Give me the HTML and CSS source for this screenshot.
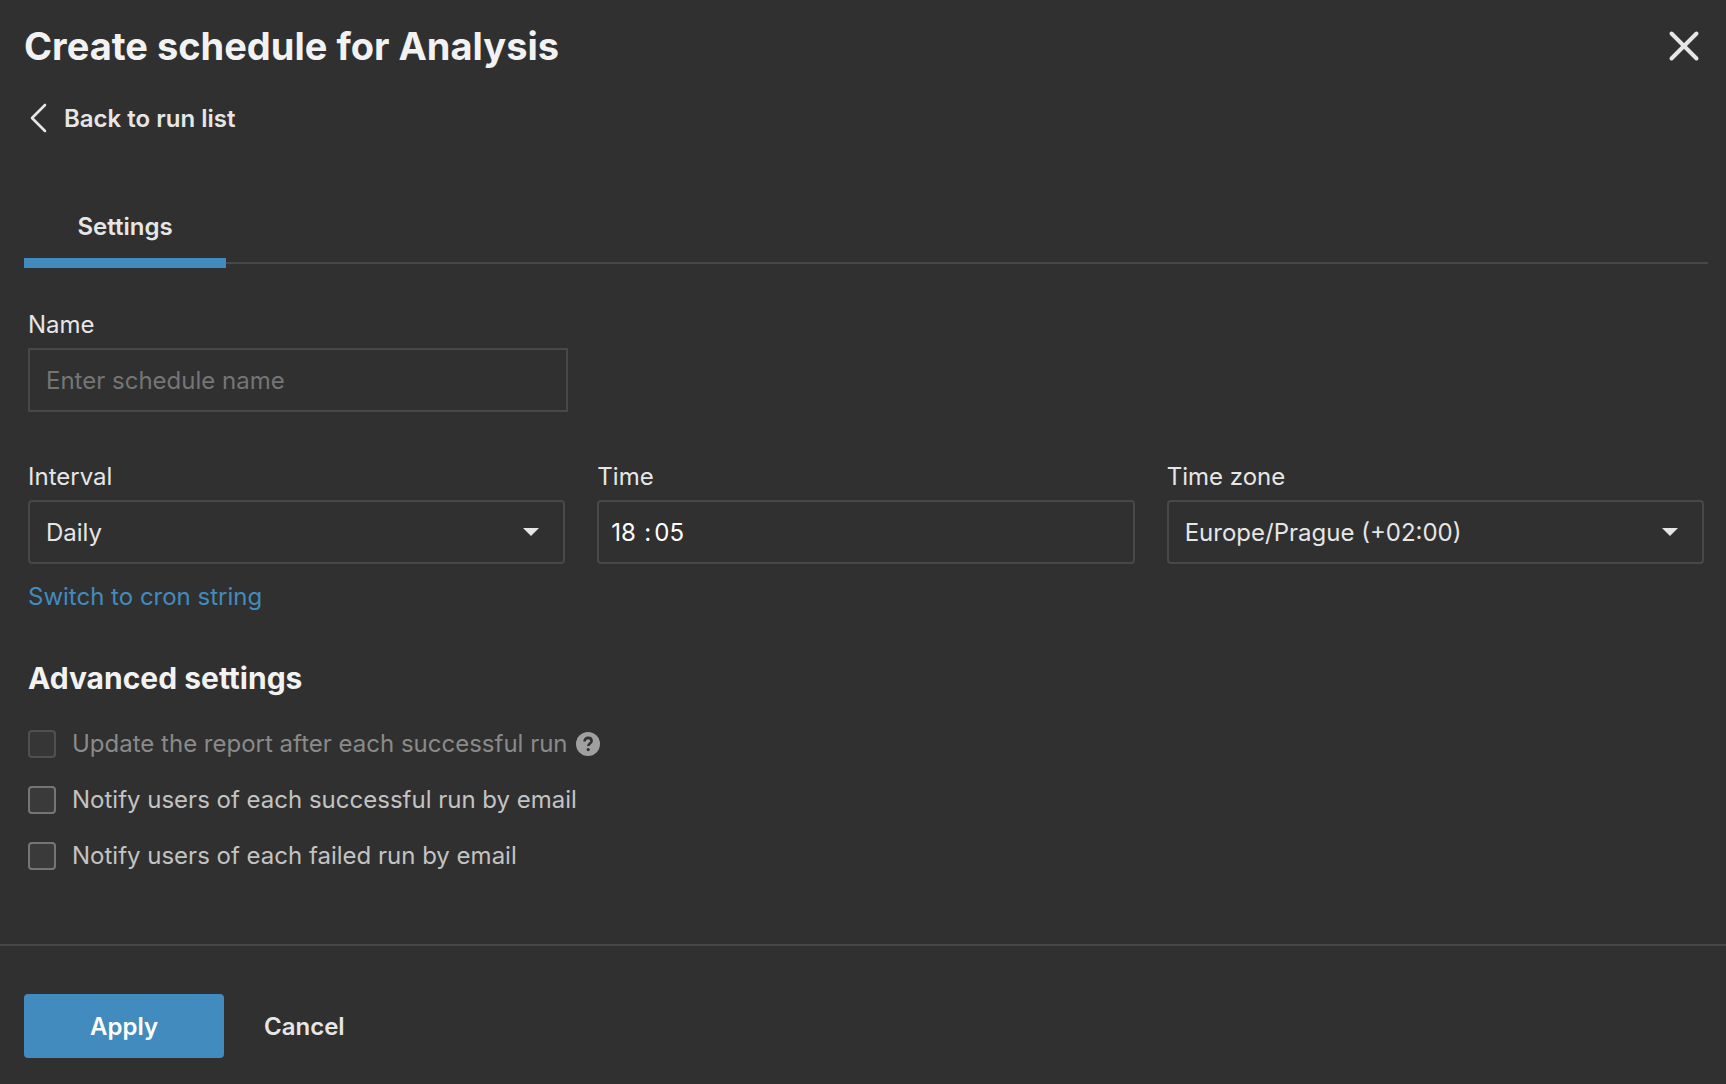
FILE: index.html
```
<!DOCTYPE html>
<html lang="en">
<head>
  <meta charset="UTF-8">
  <meta name="viewport" content="width=device-width, initial-scale=1.0">
  <title>Create schedule for Analysis</title>
  <link rel="stylesheet" href="styles.css">
</head>
<body>
  <form class="dialog">
    <header class="header">
      <h1 class="title">Create schedule for Analysis</h1>
      <button type="button" class="close" aria-label="Close">
        <svg width="32" height="32" viewBox="0 0 32 32" fill="none" stroke="currentColor" stroke-width="4" stroke-linecap="round">
          <path d="M3.5 3.5l25 25M28.5 3.5l-25 25"/>
        </svg>
      </button>
    </header>
    <a class="back" href="#">
      <svg width="20" height="32" viewBox="0 0 20 32" fill="none" stroke="currentColor" stroke-width="2.6" stroke-linecap="round" stroke-linejoin="round">
        <path d="M17 2L4 15l13 13"/>
      </svg>
      <span>Back to run list</span>
    </a>

    <nav class="tabs">
      <button type="button" class="tab">Settings</button>
    </nav>

    <main class="content">
      <div class="field field-name">
        <label for="name">Name</label>
        <input type="text" id="name" class="control" placeholder="Enter schedule name">
      </div>

      <div class="row">
        <div class="field">
          <label for="interval">Interval</label>
          <div class="select">
            <select id="interval" class="control rounded">
              <option>Daily</option>
            </select>
            <svg class="caret" width="16" height="8" viewBox="0 0 16 8"><path d="M0 0h16L8 8z" fill="currentColor"/></svg>
          </div>
        </div>
        <div class="field">
          <label for="hours">Time</label>
          <div class="control rounded time">
            <input type="text" id="hours" class="time-part" value="18" maxlength="2">
            <span>:</span>
            <input type="text" class="time-part" value="05" maxlength="2" aria-label="Minutes">
          </div>
        </div>
        <div class="field">
          <label for="zone">Time zone</label>
          <div class="select">
            <select id="zone" class="control rounded">
              <option>Europe/Prague (+02:00)</option>
            </select>
            <svg class="caret" width="16" height="8" viewBox="0 0 16 8"><path d="M0 0h16L8 8z" fill="currentColor"/></svg>
          </div>
        </div>
      </div>
      <a class="switch" href="#">Switch to cron string</a>

      <h2 class="subtitle">Advanced settings</h2>
      <div class="options">
        <div class="option disabled">
          <input type="checkbox" id="update" class="check" disabled>
          <label for="update">Update the report after each successful run</label>
          <svg class="help" width="24" height="24" viewBox="0 0 24 24">
            <circle cx="12" cy="12" r="12" fill="currentColor"/>
            <path class="help-mark" d="M8.6 9.4c0-2.1 1.4-3.5 3.5-3.5s3.5 1.3 3.5 3.1c0 2.4-3.3 2.5-3.3 5"/>
            <circle class="help-dot" cx="12.2" cy="17.6" r="1.6"/>
          </svg>
        </div>
        <div class="option">
          <input type="checkbox" id="success" class="check">
          <label for="success">Notify users of each successful run by email</label>
        </div>
        <div class="option">
          <input type="checkbox" id="failed" class="check">
          <label for="failed">Notify users of each failed run by email</label>
        </div>
      </div>
    </main>

    <footer class="footer">
      <button type="submit" class="btn apply">Apply</button>
      <button type="button" class="btn cancel">Cancel</button>
    </footer>
  </form>
</body>
</html>
```
FILE: styles.css
```
* {
  box-sizing: border-box;
}
body {
  margin: 0;
  background-color: #303030;
  color: #e6e6e6;
  font-family: Inter, "Liberation Sans", sans-serif;
  font-size: 24px;
  line-height: 32px;
}
button,
input,
select {
  font: inherit;
  color: inherit;
}
button {
  padding: 0;
  border: 0;
  background: none;
  cursor: pointer;
}
a {
  text-decoration: none;
}
svg {
  display: block;
  flex: none;
}
.dialog {
  display: flex;
  flex-direction: column;
  min-height: 100vh;
}
.header {
  display: flex;
  align-items: center;
  justify-content: space-between;
  padding: 22px 26px 0 24px;
}
.title {
  margin: 0;
  color: #f2f2f2;
  font-size: 38px;
  line-height: 48px;
  font-weight: 700;
}
.back {
  display: flex;
  align-items: center;
  align-self: flex-start;
  gap: 16px;
  margin: 33px 0 0 28px;
  color: #e6e6e6;
  font-weight: 600;
}

/* tabs */
.tabs {
  position: relative;
  display: flex;
  margin: 76px 18px 0 24px;
}
.tabs::after {
  content: "";
  position: absolute;
  left: 0;
  right: 0;
  bottom: 4px;
  height: 2px;
  background-color: #484848;
}
.tab {
  position: relative;
  z-index: 1;
  min-width: 202px;
  padding: 0 52px 15px;
  border-bottom: 10px solid #428bbe;
  font-weight: 600;
}

/* form */
.content {
  flex: 1;
  padding: 41px 22px 0 28px;
}
.field {
  display: flex;
  flex-direction: column;
  gap: 7px;
}
.field-name {
  width: 540px;
  max-width: 100%;
}
.row {
  display: grid;
  grid-template-columns: repeat(3, 1fr);
  gap: 32px;
  margin-top: 49px;
}
.control {
  width: 100%;
  height: 64px;
  padding: 0 16px;
  border: 2px solid #484848;
  background-color: transparent;
  appearance: none;
  outline: none;
}
.control::placeholder {
  color: #757575;
  opacity: 1;
}
.rounded {
  padding-top: 2px;
  border-radius: 4px;
}
.select {
  position: relative;
}
.caret {
  position: absolute;
  top: 28px;
  right: 26px;
  pointer-events: none;
}
.time {
  display: flex;
  align-items: center;
  gap: 3px;
  padding: 2px 12px 0;
  color: #fff;
}
.time-part {
  width: 30px;
  padding: 0;
  border: 0;
  background: none;
  outline: none;
}
.switch {
  display: inline-block;
  margin-top: 17px;
  color: #428bbe;
}
.subtitle {
  margin: 45px 0 0;
  color: #f2f2f2;
  font-size: 30px;
  line-height: 40px;
  font-weight: 700;
}
.options {
  display: flex;
  flex-direction: column;
  gap: 24px;
  margin-top: 30px;
}
.option {
  display: flex;
  align-items: center;
  color: #c3c3c3;
}
.check {
  width: 28px;
  height: 28px;
  margin: 0 16px 0 0;
  border: 2px solid #757575;
  border-radius: 4px;
  background-color: #3a3a3a;
  appearance: none;
}
.disabled {
  color: #8a8a8a;
}
.disabled .check {
  border-color: #505050;
  background-color: #363636;
}
.help {
  margin-left: 8px;
  color: #a0a0a0;
}
.help-mark {
  fill: none;
  stroke: #303030;
  stroke-width: 2.6;
}
.help-dot {
  fill: #303030;
}

.footer {
  display: flex;
  gap: 40px;
  padding: 48px 24px 26px;
  border-top: 2px solid #484848;
}
.btn {
  height: 64px;
  padding-top: 2px;
  font-weight: 600;
}
.apply {
  width: 200px;
  border-radius: 4px;
  background-color: #428bbe;
  color: #fff;
}
```
